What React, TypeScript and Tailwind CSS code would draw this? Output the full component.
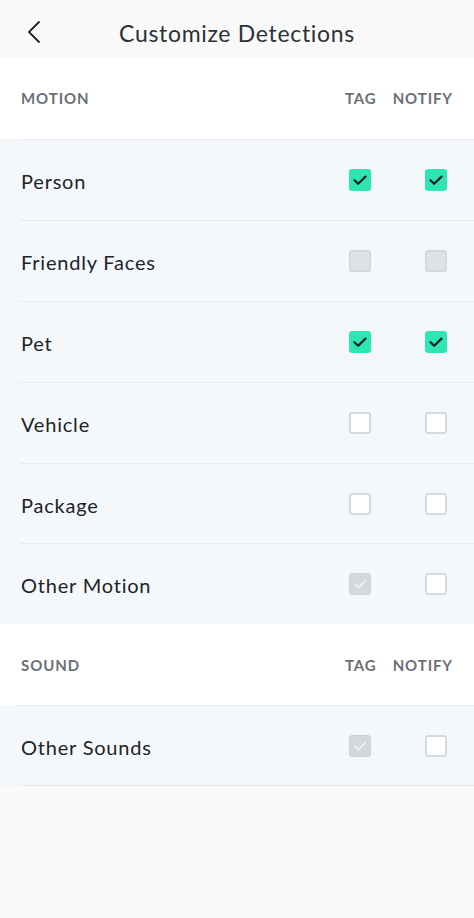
import React from "react";

type State = "on" | "off" | "disOn" | "disOff";

function Box({ s }: { s: State }) {
  if (s === "on") {
    return (
      <div className="w-[22px] h-[22px] rounded-[3px] bg-[#2ee6b3] flex items-center justify-center">
        <svg width="22" height="22" viewBox="0 0 22 22" fill="none">
          <path d="M5.5 11.2 L9.2 14.8 L16.5 7.6" stroke="#14232b" strokeWidth="2.3" strokeLinecap="round" strokeLinejoin="round" />
        </svg>
      </div>
    );
  }
  if (s === "disOn") {
    return (
      <div className="w-[22px] h-[22px] rounded-[3px] bg-[#d3d8de] border border-[#cdd2d9] flex items-center justify-center">
        <svg width="20" height="20" viewBox="0 0 20 20" fill="none">
          <path d="M4.8 10.2 L8.4 13.6 L15.2 6.8" stroke="#eef1f4" strokeWidth="1.8" strokeLinecap="round" strokeLinejoin="round" />
        </svg>
      </div>
    );
  }
  if (s === "disOff") {
    return <div className="w-[22px] h-[22px] rounded-[3px] bg-[#dfe3e8] border-2 border-[#d3d8de]" />;
  }
  return <div className="w-[22px] h-[22px] rounded-[3px] bg-white border-2 border-[#d6dade]" />;
}

function SectionHeader({ title }: { title: string }) {
  return (
    <div className="h-[81px] bg-white flex items-center pl-[21px] pr-[21px] text-[15px] font-bold tracking-[0.06em] text-[#6b7078]">
      <span className="flex-1">{title}</span>
      <span className="ml-[-1px]">TAG</span>
      <span className="ml-[16px]">NOTIFY</span>
    </div>
  );
}

function Row({ label, tag, notify, last }: { label: string; tag: State; notify: State; last?: boolean }) {
  return (
    <div className="bg-[#f5f8fb] pl-[20px] h-[80.9px]">
      <div className={"h-full border-t border-[#e7ebef] flex items-center pr-[27px] " + (last ? "border-b" : "")}>
        <span className="flex-1 pl-[1px] pt-[2px] text-[20px] tracking-[0.04em] text-[#202328]">{label}</span>
        <Box s={tag} />
        <div className="ml-[54px]">
          <Box s={notify} />
        </div>
      </div>
    </div>
  );
}

export default function App() {
  return (
    <div className="w-[474px] h-[918px] bg-[#fafafa] overflow-hidden" style={{ fontFamily: "Lato, 'Open Sans', sans-serif" }}>
      <div className="h-[58px] bg-[#f9f9f9] relative flex items-center justify-center pt-[8px]">
        <svg className="absolute left-[26px] top-[20px]" width="16" height="24" viewBox="0 0 16 24" fill="none">
          <path d="M13 2 L3 12 L13 22" stroke="#222" strokeWidth="1.8" strokeLinecap="round" strokeLinejoin="round" />
        </svg>
        <span className="text-[23px] text-[#2e3135] tracking-[0.03em]">Customize Detections</span>
      </div>
      <SectionHeader title="MOTION" />
      <Row label="Person" tag="on" notify="on" />
      <Row label="Friendly Faces" tag="disOff" notify="disOff" />
      <Row label="Pet" tag="on" notify="on" />
      <Row label="Vehicle" tag="off" notify="off" />
      <Row label="Package" tag="off" notify="off" />
      <Row label="Other Motion" tag="disOn" notify="off" />
      <SectionHeader title="SOUND" />
      <Row label="Other Sounds" tag="disOn" notify="off" last />
    </div>
  );
}
